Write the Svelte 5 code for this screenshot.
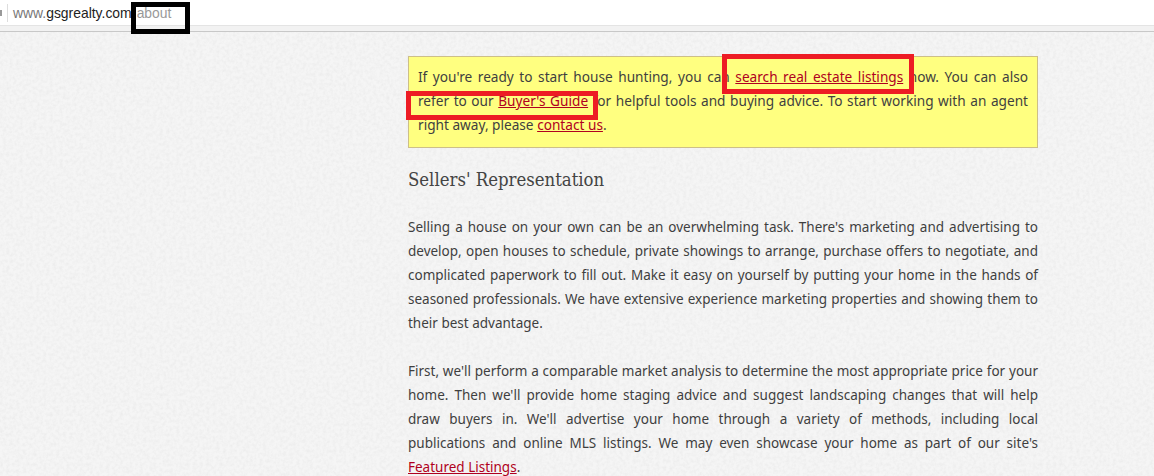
<script>
	const intro = [
		"Selling a house on your own can be an overwhelming task. There's marketing and advertising to develop, open houses to schedule, private showings to arrange, purchase offers to negotiate, and complicated paperwork to fill out. Make it easy on yourself by putting your home in the hands of seasoned professionals. We have extensive experience marketing properties and showing them to their best advantage."
	];
</script>

<div class="page">
	<svg class="paper" aria-hidden="true">
		<filter id="grain">
			<feTurbulence type="fractalNoise" baseFrequency="0.3" numOctaves="3" seed="4" />
			<feColorMatrix values="0 0 0 0 0.5  0 0 0 0 0.5  0 0 0 0 0.5  0.28 0 0 0 -0.1" />
		</filter>
		<rect width="100%" height="100%" filter="url(#grain)" />
	</svg>

	<header class="browser">
		<div class="urlbar">
			<span class="icon"></span>
			<span class="sep"></span>
			<span class="host">www.<b>gsgrealty.com</b></span><span class="path">about</span>
		</div>
		<div class="strip"></div>
	</header>

	<main class="content">
		<div class="notice">
			If you're ready to start house hunting, you can <a href="#search">search real estate listings</a> now. You can also refer to our <a href="#guide">Buyer's Guide</a> for helpful tools and buying advice. To start working with an agent right away, please <a href="#contact">contact us</a>.
		</div>

		<h2>Sellers' Representation</h2>

		{#each intro as text}
			<p>{text}</p>
		{/each}

		<p>First, we'll perform a comparable market analysis to determine the most appropriate price for your home. Then we'll provide home staging advice and suggest landscaping changes that will help draw buyers in. We'll advertise your home through a variety of methods, including local publications and online MLS listings. We may even showcase your home as part of our site's <a href="#featured">Featured Listings</a>.</p>
	</main>

	<span class="mark black"></span>
	<span class="mark red one"></span>
	<span class="mark red two"></span>
</div>

<style>
	:global(body) {
		margin: 0;
		background: #f5f5f5;
		overflow: hidden;
	}

	.page {
		position: relative;
		height: 476px;
		overflow: hidden;
		font-family: "Noto Sans", "Open Sans", sans-serif;
		color: #3f3f3f;
	}

	.paper {
		position: absolute;
		inset: 0;
		width: 100%;
		height: 100%;
	}

	.browser {
		position: relative;
	}

	.urlbar {
		display: flex;
		align-items: center;
		height: 25px;
		padding: 1px 0 0;
		box-sizing: border-box;
		background: #fff;
		font-family: "Liberation Sans", sans-serif;
		font-size: 13.9px;
		color: #777;
	}

	.icon {
		width: 2px;
		height: 6px;
		margin-right: 5px;
		background: #999;
	}

	.sep {
		width: 1px;
		height: 18px;
		margin-right: 5px;
		background: #ddd;
	}

	.host b {
		font-weight: normal;
		color: #222;
	}

	.path {
		margin-left: 5px;
		color: #999;
	}

	.strip {
		height: 5px;
		background: #f2f2f2;
		border-top: 1px solid #e4e4e4;
		border-bottom: 1px solid #c8c8c8;
	}

	.content {
		position: relative;
		width: 630px;
		margin-left: 408px;
		padding-top: 24px;
		font-size: 13.5px;
		line-height: 24px;
	}

	.notice {
		padding: 8px 9px 10px;
		font-size: 13.65px;
		background: #ffff80;
		border: 1px solid #cdbf88;
		text-align: justify;
	}

	a {
		color: #b00020;
		text-decoration: underline;
	}

	h2 {
		margin: 18px 0 21px;
		font-family: "DejaVu Serif Condensed", "DejaVu Serif", serif;
		font-stretch: condensed;
		font-size: 18.4px;
		font-weight: normal;
		line-height: 28px;
		color: #444;
	}

	p {
		margin: 0 0 24px;
		text-align: justify;
	}

	.mark {
		position: absolute;
		box-sizing: border-box;
		pointer-events: none;
	}

	.black {
		left: 131px;
		top: 2px;
		width: 59px;
		height: 32px;
		border: 5px solid #000;
	}

	.red {
		border: 5px solid #ed1c24;
	}

	.one {
		left: 722px;
		top: 54px;
		width: 192px;
		height: 40px;
	}

	.two {
		left: 406px;
		top: 91px;
		width: 192px;
		height: 29px;
	}
</style>
